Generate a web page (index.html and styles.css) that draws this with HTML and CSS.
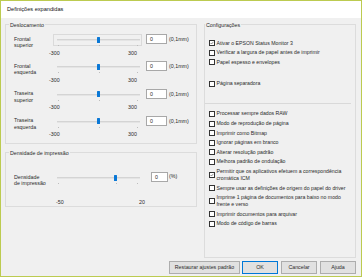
FILE: index.html
```html
<!DOCTYPE html>
<html lang="pt">
<head>
<meta charset="utf-8">
<title>Definições expandidas</title>
<link rel="stylesheet" href="styles.css">
</head>
<body>
<div class="window">
  <div class="titlebar">Definições expandidas</div>
  <div class="content">
    <div class="columns">
      <div class="leftcol">
        <div class="group g-desl">
          <div class="legend">Deslocamento</div>
          <div class="rows">
            <div class="srow">
              <div class="slabel">Frontal<br>superior</div>
              <div class="slider focus">
                <div class="track"></div>
                <div class="tick t1"></div><div class="tick t2"></div><div class="tick t3"></div>
                <div class="thumb" style="left:44px"></div>
              </div>
              <div class="spacer"></div>
              <div class="num">0</div>
              <div class="spacer"></div>
              <div class="unit">(0,1mm)</div>
              <div class="scale"><span>-300</span><span>300</span></div>
            </div>
            <div class="srow">
              <div class="slabel">Frontal<br>esquerda</div>
              <div class="slider">
                <div class="track"></div>
                <div class="tick t1"></div><div class="tick t2"></div><div class="tick t3"></div>
                <div class="thumb" style="left:44px"></div>
              </div>
              <div class="spacer"></div>
              <div class="num">0</div>
              <div class="spacer"></div>
              <div class="unit">(0,1mm)</div>
              <div class="scale"><span>-300</span><span>300</span></div>
            </div>
            <div class="srow">
              <div class="slabel">Traseira<br>superior</div>
              <div class="slider">
                <div class="track"></div>
                <div class="tick t1"></div><div class="tick t2"></div><div class="tick t3"></div>
                <div class="thumb" style="left:44px"></div>
              </div>
              <div class="spacer"></div>
              <div class="num">0</div>
              <div class="spacer"></div>
              <div class="unit">(0,1mm)</div>
              <div class="scale"><span>-300</span><span>300</span></div>
            </div>
            <div class="srow">
              <div class="slabel">Traseira<br>esquerda</div>
              <div class="slider">
                <div class="track"></div>
                <div class="tick t1"></div><div class="tick t2"></div><div class="tick t3"></div>
                <div class="thumb" style="left:44px"></div>
              </div>
              <div class="spacer"></div>
              <div class="num">0</div>
              <div class="spacer"></div>
              <div class="unit">(0,1mm)</div>
              <div class="scale"><span>-300</span><span>300</span></div>
            </div>
          </div>
        </div>
        <div class="group g-dens">
          <div class="legend">Densidade de impressão</div>
          <div class="rows">
            <div class="srow srow-dens">
              <div class="slabel">Densidade<br>de impressão</div>
              <div class="slider">
                <div class="track"></div>
                <div class="tick t1"></div><div class="tick t4"></div><div class="tick t3"></div>
                <div class="thumb" style="left:61px"></div>
              </div>
              <div class="spacer"></div>
              <div class="num">0</div>
              <div class="spacer"></div>
              <div class="unit unit-dens">(%)</div>
              <div class="scale scale-dens"><span>-50</span><span>20</span></div>
            </div>
          </div>
        </div>
      </div>
      <div class="group g-conf">
        <div class="legend legend-conf">Configurações</div>
        <div class="checks">
          <div class="cb"><span class="box"><svg viewBox="0 0 6 6" width="6" height="6"><polyline points="0.8,3 2.3,4.5 5.2,1.2" /></svg></span><span>Ativar o EPSON Status Monitor 3</span></div>
          <div class="cb"><span class="box"></span><span>Verificar a largura de papel antes de imprimir</span></div>
          <div class="cb"><span class="box"></span><span>Papel espesso e envelopes</span></div>
          <div class="cb cb-sep"><span class="box"></span><span>Página separadora</span></div>
          <div class="sep"></div>
          <div class="cb cb-after"><span class="box"></span><span>Processar sempre dados RAW</span></div>
          <div class="cb"><span class="box"></span><span>Modo de reprodução de página</span></div>
          <div class="cb"><span class="box"></span><span>Imprimir como Bitmap</span></div>
          <div class="cb"><span class="box"></span><span>Ignorar páginas em branco</span></div>
          <div class="cb"><span class="box"></span><span>Alterar resolução padrão</span></div>
          <div class="cb"><span class="box"></span><span>Melhora padrão de ondulação</span></div>
          <div class="cb"><span class="box"><svg viewBox="0 0 6 6" width="6" height="6"><polyline points="0.8,3 2.3,4.5 5.2,1.2" /></svg></span><span>Permitir que os aplicativos efetuem a correspondência<br>cromática ICM</span></div>
          <div class="cb"><span class="box"></span><span>Sempre usar as definições de origem do papel do driver</span></div>
          <div class="cb"><span class="box"></span><span>Imprime 1 página de documentos para baixo no modo<br>frente e verso</span></div>
          <div class="cb"><span class="box"></span><span>Imprimir documentos para arquivar</span></div>
          <div class="cb"><span class="box"></span><span>Modo de código de barras</span></div>
        </div>
      </div>
    </div>
    <div class="buttons">
      <div class="btn btn-wide">Restaurar ajustes padrão</div>
      <div class="btn btn-ok">OK</div>
      <div class="btn">Cancelar</div>
      <div class="btn">Ajuda</div>
    </div>
  </div>
</div>
</body>
</html>
```

FILE: styles.css
```css
* { box-sizing: border-box; }
html, body { margin: 0; padding: 0; }
body {
  width: 362px;
  height: 277px;
  overflow: hidden;
  font-family: "Liberation Sans", Arial, sans-serif;
  font-size: 5.3px;
  color: #2a2a2a;
  background: #fff;
}
.window {
  width: 362px;
  height: 277px;
  border: 1px solid #bccb50;
  background: #f0f0f0;
  display: flex;
  flex-direction: column;
}
.titlebar {
  height: 17px;
  flex: none;
  background: #fff;
  padding-left: 6px;
  line-height: 17px;
  font-size: 5.6px;
  color: #111;
}
.content {
  flex: 1;
  padding: 2px 5px 0 4px;
  display: flex;
  flex-direction: column;
}
.columns {
  display: flex;
  gap: 7px;
  align-items: flex-start;
}
.leftcol {
  width: 192px;
  flex: none;
  display: flex;
  flex-direction: column;
}
.group {
  border: 1px solid #dcdcdc;
  margin-top: 4px;
}
.legend {
  margin: -4px 0 0 3px;
  height: 8px;
  line-height: 8px;
  padding: 0 1px;
  background: #f0f0f0;
  width: max-content;
}
.legend-conf { margin-left: 0; }
.g-desl .rows { margin-top: 5px; padding-left: 8px; }
.g-dens { margin-top: 8px; }
.g-dens .rows { margin-top: 15px; padding-left: 8px; }

.srow {
  display: grid;
  grid-template-columns: 39px 89px 4px 21px 2px auto;
  grid-template-rows: 12px 7px;
  row-gap: 3.5px;
  height: 27.33px;
}
.srow-dens {
  grid-template-columns: 39px 89px 9px 17px 1px auto;
  row-gap: 14.5px;
  height: auto;
}
.slabel {
  padding-top: 1.5px;
  line-height: 6.5px;
}
.slider {
  position: relative;
  height: 12px;
}
.slider.focus { border: 1px solid #dadada; }
.track {
  position: absolute;
  left: 4px;
  right: 2px;
  top: 5px;
  height: 2px;
  background: #e4e4e4;
  border-top: 1px solid #d4d4d4;
}
.focus .track { left: 3px; right: 1px; top: 4px; }
.tick {
  position: absolute;
  top: 11px;
  width: 1px;
  height: 1px;
  background: #bdbdbd;
}
.focus .tick { top: 10px; }
.t1 { left: 5px; }
.t2 { left: 46px; }
.t3 { left: 84px; }
.t4 { left: 63px; }
.focus .t1 { left: 4px; }
.focus .t2 { left: 45px; }
.focus .t3 { left: 83px; }
.thumb {
  position: absolute;
  top: 2.5px;
  width: 3px;
  height: 6px;
  background: #0a78d6;
  border-radius: 0.5px;
}
.focus .thumb { top: 1.5px; margin-left: -1px; }
.num {
  height: 10px;
  border: 1px solid #a8a8a8;
  background: #fff;
  padding-left: 3px;
  line-height: 8px;
}
.unit {
  line-height: 10px;
  white-space: nowrap;
}
.unit-dens { line-height: 9.5px; }
.scale {
  grid-column: 1 / -1;
  display: flex;
  padding-left: 35px;
  line-height: 7px;
}
.scale span:first-child { width: 79px; }
.scale-dens { padding-left: 42px; }
.scale-dens span:first-child { width: 83px; }

.g-conf {
  width: 152px;
  flex: none;
}
.checks {
  padding: 10.5px 4px 29.5px 4px;
  display: flex;
  flex-direction: column;
  gap: 2.6px;
  font-size: 5.2px;
}
.cb {
  display: flex;
  align-items: center;
  gap: 1.5px;
  line-height: 7px;
  white-space: nowrap;
}
.cb-sep { margin-top: 12.2px; }
.sep {
  height: 1px;
  background: #d9d9d9;
  margin: 12.9px 0 2px -4px;
}
.cb-after { margin-top: 1.9px; }
.box {
  width: 6px;
  height: 6px;
  flex: none;
  border: 0.8px solid #333;
  background: #fff;
  display: flex;
  align-items: center;
  justify-content: center;
  overflow: hidden;
}
.box svg {
  display: block;
  fill: none;
  stroke: #333;
  stroke-width: 0.8;
}
.buttons {
  display: flex;
  justify-content: flex-end;
  gap: 3px;
  margin-top: 3px;
}
.btn {
  width: 36px;
  height: 13px;
  border: 1px solid #adadad;
  background: #e1e1e1;
  text-align: center;
  line-height: 11px;
  white-space: nowrap;
}
.btn-wide { width: 71px; margin-right: -1px; }
.btn-ok { border-color: #0078d7; }
```
